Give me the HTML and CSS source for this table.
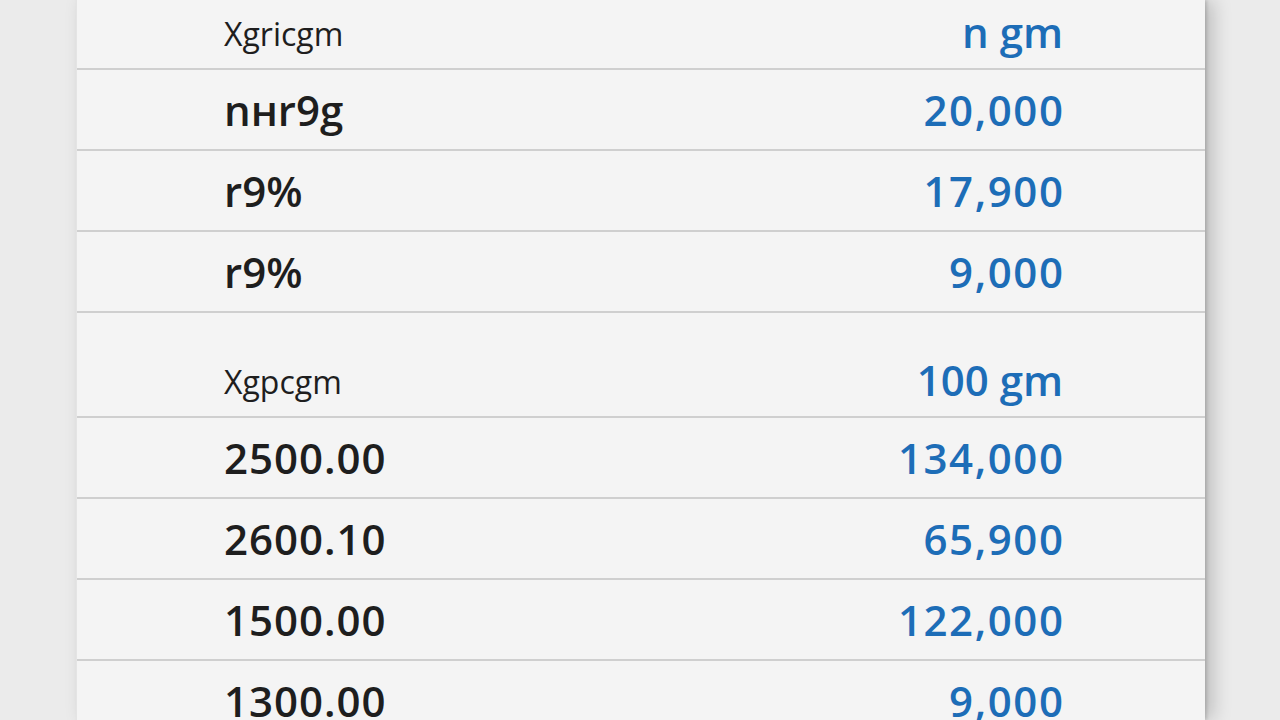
FILE: index.html
```html
<!DOCTYPE html>
<html>
<head>
<meta charset="utf-8">
<link rel="stylesheet" href="styles.css">
</head>
<body>
<div class="page">
  <div class="panel">
    <div class="row head first"><span class="label">Xgricgm</span><span class="value">n gm</span></div>
    <div class="row"><span class="label num">nнr9g</span><span class="value wide">20,000</span></div>
    <div class="row"><span class="label num">r9%</span><span class="value wide">17,900</span></div>
    <div class="row"><span class="label num">r9%</span><span class="value wide">9,000</span></div>
    <div class="row head second"><span class="label">Xgpcgm</span><span class="value">100 gm</span></div>
    <div class="row"><span class="label num wide">2500.00</span><span class="value wide">134,000</span></div>
    <div class="row"><span class="label num wide">2600.10</span><span class="value wide">65,900</span></div>
    <div class="row"><span class="label num wide">1500.00</span><span class="value wide">122,000</span></div>
    <div class="row"><span class="label num wide">1300.00</span><span class="value wide">9,000</span></div>
  </div>
</div>
</body>
</html>
```
FILE: styles.css
```css
html, body {
  margin: 0;
  padding: 0;
}
body {
  background: #ebebeb;
  font-family: "Open Sans", "Noto Sans", sans-serif;
  height: 720px;
  overflow: hidden;
}
.page {
  padding-left: 76px;
  width: 1128px;
}
.panel {
  background: #f4f4f4;
  border-left: 1px solid #e4e4e4;
  box-shadow: 8px 0 18px rgba(0, 0, 0, 0.2), 2px 0 3px rgba(0, 0, 0, 0.14);
  width: 1128px;
  height: 720px;
  overflow: hidden;
}
.row {
  display: flex;
  justify-content: space-between;
  align-items: center;
  height: 79px;
  padding: 0 142px 0 147px;
  border-bottom: 2px solid #cfcfcf;
}
.row.head {
  align-items: flex-end;
  padding-bottom: 12px;
  box-sizing: border-box;
}
.row.first {
  height: 70px;
}
.row.second {
  height: 105px;
}
.label {
  color: #1e1e1e;
  font-size: 32px;
  font-weight: 400;
  line-height: 44px;
}
.label.num {
  font-size: 42px;
  font-weight: 600;
  line-height: 56px;
}
.label.wide {
  letter-spacing: 1px;
}
.value {
  color: #1d6db7;
  font-size: 42px;
  font-weight: 600;
  line-height: 56px;
}
.value.wide {
  letter-spacing: 1.6px;
  margin-right: -1.6px;
}
.head .value {
  line-height: 48px;
}
```
